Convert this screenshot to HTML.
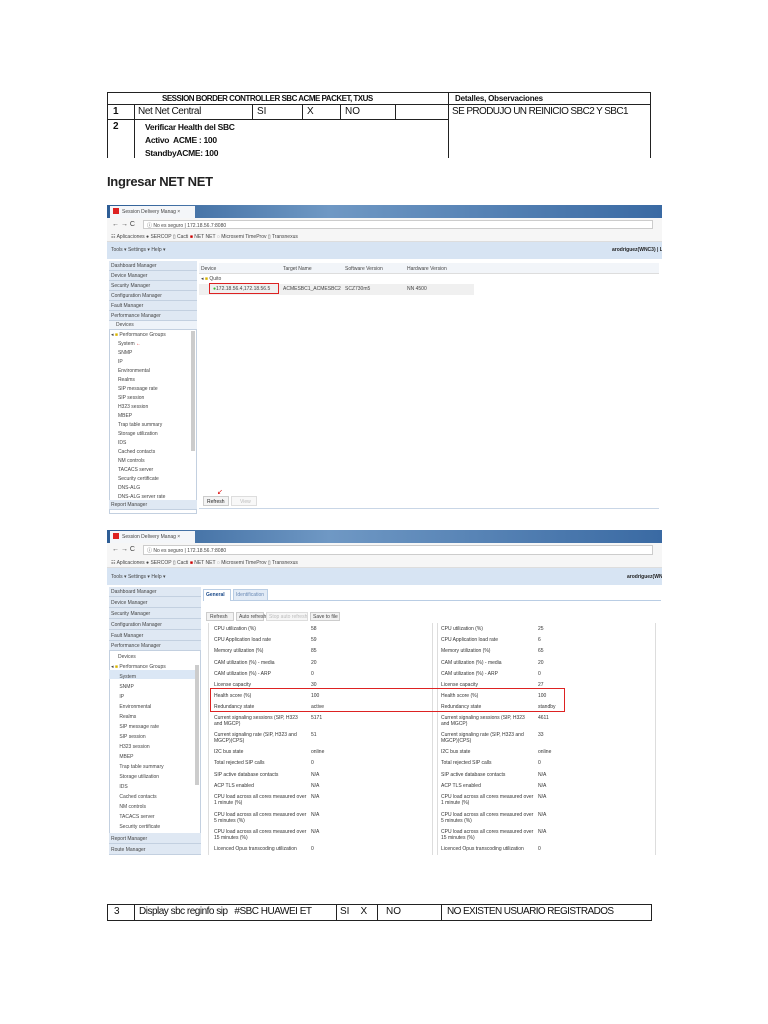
<!DOCTYPE html>
<html><head><meta charset="utf-8"><style>
*{margin:0;padding:0;box-sizing:border-box}
body{width:768px;height:1024px;background:#fff;position:relative;font-family:"Liberation Sans",sans-serif;overflow:hidden}
.a{position:absolute}
.t{font-family:"Liberation Sans",sans-serif;color:#111;white-space:nowrap}
.vl{position:absolute;width:1px;background:#222}
.hl{position:absolute;height:1px;background:#222}
.s{font-size:5px;color:#444;white-space:nowrap;position:absolute}
.side{position:absolute;background:#dfe8f3;border-bottom:1px solid #c3d0e0}
.r{position:absolute;font-size:5px;line-height:6px;color:#333;white-space:nowrap}
</style></head><body>

<!-- top table -->
<div class="hl" style="left:107px;top:92px;width:544px"></div>
<div class="hl" style="left:107px;top:104px;width:544px"></div>
<div class="hl" style="left:107px;top:119px;width:341px"></div>
<div class="vl" style="left:107px;top:92px;height:66px"></div>
<div class="vl" style="left:134px;top:104px;height:54px"></div>
<div class="vl" style="left:448px;top:92px;height:66px"></div>
<div class="vl" style="left:650px;top:92px;height:66px"></div>
<div class="vl" style="left:252px;top:104px;height:15px"></div>
<div class="vl" style="left:302px;top:104px;height:15px"></div>
<div class="vl" style="left:340px;top:104px;height:15px"></div>
<div class="vl" style="left:395px;top:104px;height:15px"></div>
<div class="a t" style="left:162px;top:94px;font-size:8px;font-weight:bold;letter-spacing:-0.5px">SESSION BORDER CONTROLLER SBC ACME PACKET, TXUS</div>
<div class="a t" style="left:455px;top:94px;font-size:8px;font-weight:bold;letter-spacing:-0.2px">Detalles, Observaciones</div>
<div class="a t" style="left:113px;top:106px;font-size:10px;font-weight:bold">1</div>
<div class="a t" style="left:138px;top:106px;font-size:10px;letter-spacing:-0.4px">Net Net Central</div>
<div class="a t" style="left:257px;top:106px;font-size:10px">SI</div>
<div class="a t" style="left:307px;top:106px;font-size:10px">X</div>
<div class="a t" style="left:345px;top:106px;font-size:10px">NO</div>
<div class="a t" style="left:452px;top:106px;font-size:10px;letter-spacing:-0.6px">SE PRODUJO UN REINICIO SBC2 Y SBC1</div>
<div class="a t" style="left:113px;top:121px;font-size:10px;font-weight:bold">2</div>
<div class="a t" style="left:145px;top:121px;font-size:8.5px;font-weight:bold;line-height:13px;letter-spacing:-0.3px">Verificar Health del SBC<br>Activo&nbsp; ACME : 100<br>StandbyACME: 100</div>

<div class="a t" style="left:107px;top:174px;font-size:13px;font-weight:bold;color:#222;letter-spacing:-0.3px">Ingresar NET NET</div>

<!-- screenshot 1 -->
<div class="a" style="left:107px;top:205px;width:555px;height:310px;background:#fff;overflow:hidden">
 <div class="a" style="left:0;top:0;width:555px;height:13px;background:linear-gradient(90deg,#2d5d95,#6f98c4 40%,#3a6aa3)"></div>
 <div class="a" style="left:3px;top:1px;width:85px;height:12px;background:#f4f6f9"></div>
 <div class="a" style="left:6px;top:3px;width:6px;height:6px;background:#d22"></div>
 <div class="s" style="left:15px;top:4px">Session Delivery Manag ×</div>
 <div class="a" style="left:0;top:13px;width:555px;height:13px;background:#f6f6f6"></div>
 <div class="a" style="left:36px;top:15px;width:510px;height:9px;border:1px solid #ccc;background:#fff"></div>
 <div class="s" style="left:5px;top:16px;font-size:7px">←  →  C</div>
 <div class="s" style="left:40px;top:17px">ⓘ No es seguro | 172.18.56.7:8080</div>
 <div class="a" style="left:0;top:26px;width:555px;height:11px;background:#f6f6f6;border-bottom:1px solid #ddd"></div>
 <div class="s" style="left:4px;top:29px">☷ Aplicaciones  ● SERCOP  ▯ Cacti  <span style="color:#c00">■</span> NET NET  ◌ Microsemi TimeProv  ▯ Transnexus</div>
 <div class="a" style="left:0;top:37px;width:555px;height:17px;background:#d7e4f3"></div>
 <div class="s" style="left:4px;top:42px">Tools ▾  Settings ▾  Help ▾</div>
 <div class="s" style="left:505px;top:42px;color:#222;font-weight:bold">arodriguez(WNC3) | Logo</div>
 <div class="a" style="left:2px;top:56px;width:88px;height:253px;background:#fff;border:1px solid #c3d0e0"></div>
 <div class="side" style="left:2px;top:56px;width:88px;height:10px"></div><div class="s" style="left:4px;top:58px">Dashboard Manager</div>
 <div class="side" style="left:2px;top:66px;width:88px;height:10px"></div><div class="s" style="left:4px;top:68px">Device Manager</div>
 <div class="side" style="left:2px;top:76px;width:88px;height:10px"></div><div class="s" style="left:4px;top:78px">Security Manager</div>
 <div class="side" style="left:2px;top:86px;width:88px;height:10px"></div><div class="s" style="left:4px;top:88px">Configuration Manager</div>
 <div class="side" style="left:2px;top:96px;width:88px;height:10px"></div><div class="s" style="left:4px;top:98px">Fault Manager</div>
 <div class="side" style="left:2px;top:106px;width:88px;height:10px"></div><div class="s" style="left:4px;top:108px">Performance Manager</div>
 <div class="side" style="left:2px;top:116px;width:88px;height:9px;background:#eef3f9"></div><div class="s" style="left:9px;top:117px">Devices</div>
 <div class="a" style="left:84px;top:126px;width:4px;height:120px;background:#ccc"></div>
 <div class="s" style="left:4px;top:126px;line-height:9px">◂ <span style="color:#d9b400">■</span> Performance Groups<br>&nbsp;&nbsp;&nbsp;&nbsp;&nbsp;System <span style="color:#d00">←</span><br>&nbsp;&nbsp;&nbsp;&nbsp;&nbsp;SNMP<br>&nbsp;&nbsp;&nbsp;&nbsp;&nbsp;IP<br>&nbsp;&nbsp;&nbsp;&nbsp;&nbsp;Environmental<br>&nbsp;&nbsp;&nbsp;&nbsp;&nbsp;Realms<br>&nbsp;&nbsp;&nbsp;&nbsp;&nbsp;SIP message rate<br>&nbsp;&nbsp;&nbsp;&nbsp;&nbsp;SIP session<br>&nbsp;&nbsp;&nbsp;&nbsp;&nbsp;H323 session<br>&nbsp;&nbsp;&nbsp;&nbsp;&nbsp;MBEP<br>&nbsp;&nbsp;&nbsp;&nbsp;&nbsp;Trap table summary<br>&nbsp;&nbsp;&nbsp;&nbsp;&nbsp;Storage utilization<br>&nbsp;&nbsp;&nbsp;&nbsp;&nbsp;IDS<br>&nbsp;&nbsp;&nbsp;&nbsp;&nbsp;Cached contacts<br>&nbsp;&nbsp;&nbsp;&nbsp;&nbsp;NM controls<br>&nbsp;&nbsp;&nbsp;&nbsp;&nbsp;TACACS server<br>&nbsp;&nbsp;&nbsp;&nbsp;&nbsp;Security certificate<br>&nbsp;&nbsp;&nbsp;&nbsp;&nbsp;DNS-ALG<br>&nbsp;&nbsp;&nbsp;&nbsp;&nbsp;DNS-ALG server rate</div>
 <div class="side" style="left:2px;top:295px;width:88px;height:10px"></div><div class="s" style="left:4px;top:297px">Report Manager</div>
 <div class="a" style="left:92px;top:58px;width:460px;height:11px;background:#f2f5f9;border-bottom:1px solid #ddd"></div>
 <div class="s" style="left:94px;top:61px">Device</div><div class="s" style="left:176px;top:61px">Target Name</div><div class="s" style="left:238px;top:61px">Software Version</div><div class="s" style="left:300px;top:61px">Hardware Version</div>
 <div class="s" style="left:94px;top:71px">◂ <span style="color:#d9b400">■</span> Quito</div>
 <div class="a" style="left:92px;top:79px;width:275px;height:11px;background:#f0f0f0"></div>
 <div class="a" style="left:102px;top:78px;width:70px;height:11px;border:1.5px solid #d22"></div>
 <div class="s" style="left:106px;top:81px"><span style="color:#3b3">●</span>172.18.56.4,172.18.56.5</div>
 <div class="s" style="left:176px;top:81px">ACMESBC1_ACMESBC2</div><div class="s" style="left:238px;top:81px">SCZ730m5</div><div class="s" style="left:300px;top:81px">NN 4500</div>
 <div class="a" style="left:96px;top:291px;width:26px;height:10px;border:1px solid #ccc;background:#f4f4f4"></div><div class="s" style="left:100px;top:294px;color:#222">Refresh</div>
 <div class="a" style="left:124px;top:291px;width:26px;height:10px;border:1px solid #ddd;background:#f8f8f8"></div><div class="s" style="left:133px;top:294px;color:#bbb">View</div>
 <div class="s" style="left:110px;top:283px;color:#d00;font-size:7px">↙</div>
 <div class="a" style="left:92px;top:303px;width:460px;height:1px;background:#c9d6e6"></div>
</div>

<!-- screenshot 2 -->
<div class="a" style="left:107px;top:530px;width:555px;height:325px;background:#fff;overflow:hidden">
 <div class="a" style="left:0;top:0;width:555px;height:13px;background:linear-gradient(90deg,#2d5d95,#6f98c4 40%,#3a6aa3)"></div>
 <div class="a" style="left:3px;top:1px;width:85px;height:12px;background:#f4f6f9"></div>
 <div class="a" style="left:6px;top:3px;width:6px;height:6px;background:#d22"></div>
 <div class="s" style="left:15px;top:4px">Session Delivery Manag ×</div>
 <div class="a" style="left:0;top:13px;width:555px;height:14px;background:#f6f6f6"></div>
 <div class="a" style="left:36px;top:15px;width:510px;height:10px;border:1px solid #ccc;background:#fff"></div>
 <div class="s" style="left:5px;top:16px;font-size:7px">←  →  C</div>
 <div class="s" style="left:40px;top:17px">ⓘ No es seguro | 172.18.56.7:8080</div>
 <div class="a" style="left:0;top:27px;width:555px;height:11px;background:#f6f6f6;border-bottom:1px solid #ddd"></div>
 <div class="s" style="left:4px;top:30px">☷ Aplicaciones  ● SERCOP  ▯ Cacti  <span style="color:#c00">■</span> NET NET  ◌ Microsemi TimeProv  ▯ Transnexus</div>
 <div class="a" style="left:0;top:38px;width:555px;height:17px;background:#d7e4f3"></div>
 <div class="s" style="left:4px;top:44px">Tools ▾  Settings ▾  Help ▾</div>
 <div class="s" style="left:520px;top:44px;color:#222;font-weight:bold">arodriguez(WN</div>
 <div class="a" style="left:2px;top:57px;width:92px;height:268px;background:#fff;border:1px solid #c3d0e0"></div>
 <div class="side" style="left:2px;top:57px;width:92px;height:10px"></div><div class="s" style="left:4px;top:59px">Dashboard Manager</div>
 <div class="side" style="left:2px;top:67px;width:92px;height:11px"></div><div class="s" style="left:4px;top:70px">Device Manager</div>
 <div class="side" style="left:2px;top:78px;width:92px;height:11px"></div><div class="s" style="left:4px;top:81px">Security Manager</div>
 <div class="side" style="left:2px;top:89px;width:92px;height:11px"></div><div class="s" style="left:4px;top:92px">Configuration Manager</div>
 <div class="side" style="left:2px;top:100px;width:92px;height:11px"></div><div class="s" style="left:4px;top:103px">Fault Manager</div>
 <div class="side" style="left:2px;top:111px;width:92px;height:10px"></div><div class="s" style="left:4px;top:113px">Performance Manager</div>
 <div class="a" style="left:2px;top:140px;width:86px;height:9px;background:#dbe7f5"></div>
 <div class="a" style="left:88px;top:135px;width:4px;height:120px;background:#ccc"></div>
 <div class="s" style="left:11px;top:122px;line-height:10px">Devices</div>
 <div class="s" style="left:4px;top:132px;line-height:10px">◂ <span style="color:#d9b400">■</span> Performance Groups<br>&nbsp;&nbsp;&nbsp;&nbsp;&nbsp;&nbsp;System<br>&nbsp;&nbsp;&nbsp;&nbsp;&nbsp;&nbsp;SNMP<br>&nbsp;&nbsp;&nbsp;&nbsp;&nbsp;&nbsp;IP<br>&nbsp;&nbsp;&nbsp;&nbsp;&nbsp;&nbsp;Environmental<br>&nbsp;&nbsp;&nbsp;&nbsp;&nbsp;&nbsp;Realms<br>&nbsp;&nbsp;&nbsp;&nbsp;&nbsp;&nbsp;SIP message rate<br>&nbsp;&nbsp;&nbsp;&nbsp;&nbsp;&nbsp;SIP session<br>&nbsp;&nbsp;&nbsp;&nbsp;&nbsp;&nbsp;H323 session<br>&nbsp;&nbsp;&nbsp;&nbsp;&nbsp;&nbsp;MBEP<br>&nbsp;&nbsp;&nbsp;&nbsp;&nbsp;&nbsp;Trap table summary<br>&nbsp;&nbsp;&nbsp;&nbsp;&nbsp;&nbsp;Storage utilization<br>&nbsp;&nbsp;&nbsp;&nbsp;&nbsp;&nbsp;IDS<br>&nbsp;&nbsp;&nbsp;&nbsp;&nbsp;&nbsp;Cached contacts<br>&nbsp;&nbsp;&nbsp;&nbsp;&nbsp;&nbsp;NM controls<br>&nbsp;&nbsp;&nbsp;&nbsp;&nbsp;&nbsp;TACACS server<br>&nbsp;&nbsp;&nbsp;&nbsp;&nbsp;&nbsp;Security certificate<br>&nbsp;&nbsp;&nbsp;&nbsp;&nbsp;&nbsp;DNS-ALG<br>&nbsp;&nbsp;&nbsp;&nbsp;&nbsp;&nbsp;DNS-ALG server rate</div>
 <div class="side" style="left:2px;top:303px;width:92px;height:11px"></div><div class="s" style="left:4px;top:306px">Report Manager</div>
 <div class="side" style="left:2px;top:314px;width:92px;height:11px"></div><div class="s" style="left:4px;top:317px">Route Manager</div>
 <div class="a" style="left:96px;top:57px;width:458px;height:14px;border-bottom:1px solid #b9cde4"></div>
 <div class="a" style="left:96px;top:59px;width:28px;height:12px;background:#fff;border:1px solid #b9cde4;border-bottom:none"></div><div class="s" style="left:99px;top:62px;color:#1a4a8a;font-weight:bold">General</div>
 <div class="a" style="left:126px;top:59px;width:35px;height:12px;background:#e2ebf6;border:1px solid #b9cde4"></div><div class="s" style="left:129px;top:62px;color:#6a8ab5">Identification</div>
 <div class="a" style="left:99px;top:82px;width:28px;height:9px;background:#f2f2f2;border:1px solid #ccc"></div><div class="s" style="left:103px;top:84px">Refresh</div>
 <div class="a" style="left:129px;top:82px;width:28px;height:9px;background:#f2f2f2;border:1px solid #ccc"></div><div class="s" style="left:132px;top:84px">Auto refresh</div>
 <div class="a" style="left:159px;top:82px;width:42px;height:9px;background:#f6f6f6;border:1px solid #ddd"></div><div class="s" style="left:162px;top:84px;color:#bbb">Stop auto refresh</div>
 <div class="a" style="left:203px;top:82px;width:30px;height:9px;background:#f2f2f2;border:1px solid #ccc"></div><div class="s" style="left:206px;top:84px">Save to file</div>
 <div class="a" style="left:101px;top:93px;width:1px;height:232px;background:#ddd"></div>
 <div class="a" style="left:325px;top:93px;width:1px;height:232px;background:#ddd"></div>
 <div class="a" style="left:330px;top:93px;width:1px;height:232px;background:#ddd"></div>
 <div class="a" style="left:548px;top:93px;width:1px;height:232px;background:#ddd"></div>

 <!-- left data -->
 <div class="r" style="left:107px;top:96px">CPU utilization (%)</div><div class="r" style="left:204px;top:96px">58</div>
 <div class="r" style="left:107px;top:107px">CPU Application load rate</div><div class="r" style="left:204px;top:107px">59</div>
 <div class="r" style="left:107px;top:118px">Memory utilization (%)</div><div class="r" style="left:204px;top:118px">85</div>
 <div class="r" style="left:107px;top:130px">CAM utilization (%) - media</div><div class="r" style="left:204px;top:130px">20</div>
 <div class="r" style="left:107px;top:141px">CAM utilization (%) - ARP</div><div class="r" style="left:204px;top:141px">0</div>
 <div class="r" style="left:107px;top:152px">License capacity</div><div class="r" style="left:204px;top:152px">30</div>
 <div class="r" style="left:107px;top:163px">Health score (%)</div><div class="r" style="left:204px;top:163px">100</div>
 <div class="r" style="left:107px;top:174px">Redundancy state</div><div class="r" style="left:204px;top:174px">active</div>
 <div class="r" style="left:107px;top:185px">Current signaling sessions (SIP, H323<br>and MGCP)</div><div class="r" style="left:204px;top:185px">5171</div>
 <div class="r" style="left:107px;top:202px">Current signaling rate (SIP, H323 and<br>MGCP)(CPS)</div><div class="r" style="left:204px;top:202px">51</div>
 <div class="r" style="left:107px;top:219px">I2C bus state</div><div class="r" style="left:204px;top:219px">online</div>
 <div class="r" style="left:107px;top:230px">Total rejected SIP calls</div><div class="r" style="left:204px;top:230px">0</div>
 <div class="r" style="left:107px;top:242px">SIP active database contacts</div><div class="r" style="left:204px;top:242px">N/A</div>
 <div class="r" style="left:107px;top:253px">ACP TLS enabled</div><div class="r" style="left:204px;top:253px">N/A</div>
 <div class="r" style="left:107px;top:264px">CPU load across all cores measured over<br>1 minute (%)</div><div class="r" style="left:204px;top:264px">N/A</div>
 <div class="r" style="left:107px;top:282px">CPU load across all cores measured over<br>5 minutes (%)</div><div class="r" style="left:204px;top:282px">N/A</div>
 <div class="r" style="left:107px;top:299px">CPU load across all cores measured over<br>15 minutes (%)</div><div class="r" style="left:204px;top:299px">N/A</div>
 <div class="r" style="left:107px;top:316px">Licenced Opus transcoding utilization</div><div class="r" style="left:204px;top:316px">0</div>

 <!-- right data -->
 <div class="r" style="left:334px;top:96px">CPU utilization (%)</div><div class="r" style="left:431px;top:96px">25</div>
 <div class="r" style="left:334px;top:107px">CPU Application load rate</div><div class="r" style="left:431px;top:107px">6</div>
 <div class="r" style="left:334px;top:118px">Memory utilization (%)</div><div class="r" style="left:431px;top:118px">65</div>
 <div class="r" style="left:334px;top:130px">CAM utilization (%) - media</div><div class="r" style="left:431px;top:130px">20</div>
 <div class="r" style="left:334px;top:141px">CAM utilization (%) - ARP</div><div class="r" style="left:431px;top:141px">0</div>
 <div class="r" style="left:334px;top:152px">License capacity</div><div class="r" style="left:431px;top:152px">27</div>
 <div class="r" style="left:334px;top:163px">Health score (%)</div><div class="r" style="left:431px;top:163px">100</div>
 <div class="r" style="left:334px;top:174px">Redundancy state</div><div class="r" style="left:431px;top:174px">standby</div>
 <div class="r" style="left:334px;top:185px">Current signaling sessions (SIP, H323<br>and MGCP)</div><div class="r" style="left:431px;top:185px">4611</div>
 <div class="r" style="left:334px;top:202px">Current signaling rate (SIP, H323 and<br>MGCP)(CPS)</div><div class="r" style="left:431px;top:202px">33</div>
 <div class="r" style="left:334px;top:219px">I2C bus state</div><div class="r" style="left:431px;top:219px">online</div>
 <div class="r" style="left:334px;top:230px">Total rejected SIP calls</div><div class="r" style="left:431px;top:230px">0</div>
 <div class="r" style="left:334px;top:242px">SIP active database contacts</div><div class="r" style="left:431px;top:242px">N/A</div>
 <div class="r" style="left:334px;top:253px">ACP TLS enabled</div><div class="r" style="left:431px;top:253px">N/A</div>
 <div class="r" style="left:334px;top:264px">CPU load across all cores measured over<br>1 minute (%)</div><div class="r" style="left:431px;top:264px">N/A</div>
 <div class="r" style="left:334px;top:282px">CPU load across all cores measured over<br>5 minutes (%)</div><div class="r" style="left:431px;top:282px">N/A</div>
 <div class="r" style="left:334px;top:299px">CPU load across all cores measured over<br>15 minutes (%)</div><div class="r" style="left:431px;top:299px">N/A</div>
 <div class="r" style="left:334px;top:316px">Licenced Opus transcoding utilization</div><div class="r" style="left:431px;top:316px">0</div>

 <div class="a" style="left:103px;top:158px;width:355px;height:24px;border:1.5px solid #d22"></div>
</div>

<!-- bottom table -->
<div class="hl" style="left:107px;top:904px;width:545px"></div>
<div class="hl" style="left:107px;top:920px;width:545px"></div>
<div class="vl" style="left:107px;top:904px;height:17px"></div>
<div class="vl" style="left:134px;top:904px;height:17px"></div>
<div class="vl" style="left:336px;top:904px;height:17px"></div>
<div class="vl" style="left:377px;top:904px;height:17px"></div>
<div class="vl" style="left:441px;top:904px;height:17px"></div>
<div class="vl" style="left:651px;top:904px;height:17px"></div>
<div class="a t" style="left:114px;top:906px;font-size:10px">3</div>
<div class="a t" style="left:139px;top:906px;font-size:10px;letter-spacing:-0.5px">Display sbc reginfo sip&nbsp;&nbsp; #SBC HUAWEI ET</div>
<div class="a t" style="left:340px;top:906px;font-size:10px">SI&nbsp;&nbsp;&nbsp; X</div>
<div class="a t" style="left:386px;top:906px;font-size:10px">NO</div>
<div class="a t" style="left:447px;top:906px;font-size:10px;letter-spacing:-0.6px">NO EXISTEN USUARIO REGISTRADOS</div>
</body></html>
